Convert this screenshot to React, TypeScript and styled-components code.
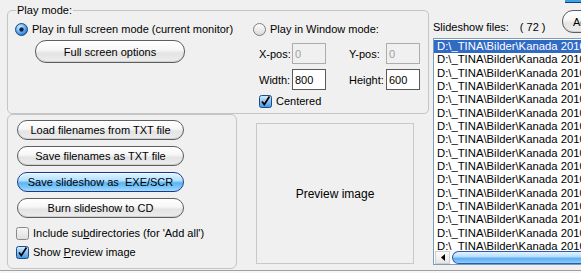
import React from 'react';
import styled, { createGlobalStyle, css } from 'styled-components';

const GlobalStyle = createGlobalStyle`
  html, body {
    margin: 0;
    padding: 0;
    background: #f0f0f0;
  }
  body {
    font-family: 'Liberation Sans', Arial, sans-serif;
    font-size: 11px;
    color: #000;
  }
`;

const Window = styled.div`
  width: 581px;
  height: 273px;
  overflow: hidden;
  background: #f0f0f0;
  display: flex;
  flex-direction: column;
`;

const Main = styled.div`
  height: 270px;
  display: flex;
  flex-shrink: 0;
`;

const BottomEdge = styled.div`
  flex: 1;
  border-top: 1px solid #a0a0a0;
  background: #f7f7f7;
`;

const LeftCol = styled.div`
  width: 422px;
  margin-left: 7px;
  display: flex;
  flex-direction: column;
  flex-shrink: 0;
`;

const PlayModeBox = styled.fieldset`
  margin: 4px 0 0 0;
  padding: 6px 0 0 0;
  height: 110px;
  box-sizing: border-box;
  border: 1px solid #c5c5c5;
  border-radius: 5px;
  display: flex;
  min-width: 0;
`;

const Legend = styled.legend`
  margin-left: 8px;
  padding: 0 1px;
  line-height: 13px;
`;

const FullScreenCol = styled.div`
  width: 245px;
  padding-left: 7px;
  box-sizing: border-box;
  display: flex;
  flex-direction: column;
  align-items: flex-start;
`;

const WindowCol = styled.div`
  display: flex;
  flex-direction: column;
  align-items: flex-start;
`;

const OptionRow = styled.label`
  display: flex;
  align-items: center;
  gap: 4px;
  height: 13px;
  line-height: 13px;
  white-space: nowrap;
`;

const PosGrid = styled.div`
  margin: 7px 0 0 6px;
  display: grid;
  grid-template-columns: 33px 34px 23px 37px 34px;
  grid-auto-rows: 21px;
  row-gap: 5px;
  align-items: center;
`;

const PosLabel = styled.span<{ $col: number }>`
  grid-column: ${({ $col }) => $col};
  white-space: nowrap;
`;

const PosInput = styled.input<{ $col: number }>`
  grid-column: ${({ $col }) => $col};
  width: 34px;
  height: 21px;
  box-sizing: border-box;
  margin: 0;
  padding: 0 2px;
  font: 11px 'Liberation Sans', Arial, sans-serif;
  border: 1px solid ${({ disabled }) => (disabled ? '#adadad' : '#5a5a5a')};
  background: ${({ disabled }) => (disabled ? '#f0f0f0' : '#fff')};
  color: ${({ disabled }) => (disabled ? '#a0a0a0' : '#000')};
  outline: none;
`;

const CenteredRow = styled(OptionRow)`
  margin: 5px 0 0 6px;
`;

const pill = css`
  box-sizing: border-box;
  border-radius: 11px;
  border: 1px solid #5e5e5e;
  background: linear-gradient(#ffffff 0%, #f7f7f7 42%, #e4e4e4 58%, #ececec 100%);
  box-shadow: inset 0 1px 0 #fff, inset 0 -1px 0 #d0d0d0;
  font: 11px 'Liberation Sans', Arial, sans-serif;
  color: #000;
  padding: 0;
  display: flex;
  align-items: center;
  justify-content: center;
  white-space: nowrap;
`;

const PillButton = styled.button<{ $blue?: boolean; $w: number; $h: number }>`
  ${pill};
  width: ${({ $w }) => $w}px;
  height: ${({ $h }) => $h}px;
  ${({ $blue }) =>
    $blue &&
    css`
      border-color: #1d3890;
      background: linear-gradient(#e2f4ff 0%, #b3e0ff 42%, #5db3f3 55%, #7cc8fb 80%, #a6dcff 100%);
      box-shadow: inset 0 1px 0 #f0faff;
    `}
`;

const FullScreenButton = styled(PillButton)`
  margin: 4px 0 0 20px;
`;

const LowerRow = styled.div`
  display: flex;
  align-items: flex-start;
`;

const ActionBox = styled.div`
  width: 230px;
  height: 155px;
  box-sizing: border-box;
  border: 1px solid #c5c5c5;
  border-radius: 6px;
  padding: 5px 0 0 9px;
  display: flex;
  flex-direction: column;
  align-items: flex-start;
`;

const ButtonStack = styled.div`
  display: flex;
  flex-direction: column;
  gap: 6px;
`;

const CheckStack = styled.div`
  margin: 9px 0 0 -1px;
  display: flex;
  flex-direction: column;
  gap: 6px;
`;

const PreviewBox = styled.div`
  margin: 9px 0 0 19px;
  width: 158px;
  height: 141px;
  box-sizing: border-box;
  border: 1px solid #c9c9c9;
  display: flex;
  align-items: center;
  justify-content: center;
  font-size: 12px;
`;

const RightCol = styled.div`
  margin-left: 4px;
  display: flex;
  flex-direction: column;
  flex-shrink: 0;
`;

const FilesHeader = styled.div`
  height: 38px;
  display: flex;
  align-items: flex-start;
`;

const FilesLabel = styled.div`
  width: 129px;
  margin-top: 21px;
  line-height: 13px;
  white-space: nowrap;
`;

const Count = styled.span`
  margin-left: 11px;
`;

const TopButtons = styled.div`
  display: flex;
  flex-direction: column;
`;

const ClippedButtonEdge = styled.div`
  margin-left: 3px;
  width: 40px;
  height: 2px;
  background: #3aa6d8;
  border-bottom: 1px solid #1d3890;
`;

const AddButton = styled.button`
  ${pill};
  margin-top: 7px;
  width: 44px;
  height: 23px;
  justify-content: flex-start;
  padding-left: 10px;
  border-radius: 11px 0 0 11px;
`;

const ListBox = styled.div`
  width: 200px;
  height: 227px;
  box-sizing: border-box;
  border: 1px solid #7f9db9;
  background: #fff;
  padding: 1px 0 0 0;
  display: flex;
  flex-direction: column;
`;

const Rows = styled.div`
  flex: 1;
  overflow: hidden;
`;

const Row = styled.div<{ $selected?: boolean }>`
  height: 13.33px;
  line-height: 13.33px;
  padding-left: 3px;
  font-size: 11.3px;
  white-space: nowrap;
  background: ${({ $selected }) => ($selected ? '#316ac5' : 'transparent')};
  color: ${({ $selected }) => ($selected ? '#fff' : '#000')};
`;

const HScroll = styled.div`
  height: 13px;
  margin: 0 0 0 1px;
  display: flex;
  align-items: center;
  background: #fafafa;
  flex-shrink: 0;
`;

const ScrollArrow = styled.div`
  width: 15px;
  height: 13px;
  box-sizing: border-box;
  border: 1px solid #cfcfcf;
  background: linear-gradient(#fdfdfd, #e6e6e6);
  display: flex;
  align-items: center;
  justify-content: center;
`;

const ScrollThumb = styled.div`
  margin-left: 2px;
  flex: 1;
  height: 13px;
  box-sizing: border-box;
  border: 1px solid #2a5bb0;
  border-right: none;
  border-radius: 7px 0 0 7px;
  background: linear-gradient(#e4f3ff 0%, #b8dfff 40%, #5eaef0 60%, #8ccdfb 100%);
`;

const Radio = ({ checked }: { checked?: boolean }) => (
  <svg width="13" height="13" viewBox="0 0 13 13">
    <defs>
      <radialGradient id="rOn" cx="40%" cy="35%" r="70%">
        <stop offset="0%" stopColor="#eaf8ff" />
        <stop offset="50%" stopColor="#6fb6f0" />
        <stop offset="100%" stopColor="#1f66c0" />
      </radialGradient>
      <linearGradient id="rOff" x1="0" y1="0" x2="0" y2="1">
        <stop offset="0%" stopColor="#ffffff" />
        <stop offset="100%" stopColor="#d8d8d8" />
      </linearGradient>
    </defs>
    <circle
      cx="6.5"
      cy="6.5"
      r="6"
      fill={checked ? 'url(#rOn)' : 'url(#rOff)'}
      stroke={checked ? '#1b4d86' : '#7d7d7d'}
    />
    {checked && <circle cx="6.5" cy="6.5" r="2.2" fill="#0b2350" />}
  </svg>
);

const CheckBox = ({ checked }: { checked?: boolean }) => (
  <svg width="13" height="13" viewBox="0 0 13 13">
    <defs>
      <linearGradient id="cOn" x1="0" y1="0" x2="0" y2="1">
        <stop offset="0%" stopColor="#d9efff" />
        <stop offset="100%" stopColor="#3f93e4" />
      </linearGradient>
      <linearGradient id="cOff" x1="0" y1="0" x2="0" y2="1">
        <stop offset="0%" stopColor="#f7f7f7" />
        <stop offset="100%" stopColor="#dedede" />
      </linearGradient>
    </defs>
    <rect
      x="0.5"
      y="0.5"
      width="12"
      height="12"
      rx="2"
      fill={checked ? 'url(#cOn)' : 'url(#cOff)'}
      stroke={checked ? '#1b4d86' : '#8a8a8a'}
    />
    {checked && (
      <path d="M3 6.5 L5.3 9.5 L10.5 1.5" fill="none" stroke="#000" strokeWidth="1.7" />
    )}
  </svg>
);

const files = Array.from({ length: 16 }, () => 'D:\\_TINA\\Bilder\\Kanada 2010\\IMG_');

export default function App() {
  return (
    <Window>
      <GlobalStyle />
      <Main>
        <LeftCol>
          <PlayModeBox>
            <Legend>Play mode:</Legend>
            <FullScreenCol>
              <OptionRow>
                <Radio checked />
                Play in full screen mode (current monitor)
              </OptionRow>
              <FullScreenButton $w={150} $h={23}>
                Full screen options
              </FullScreenButton>
            </FullScreenCol>
            <WindowCol>
              <OptionRow>
                <Radio />
                Play in Window mode:
              </OptionRow>
              <PosGrid>
                <PosLabel $col={1}>X-pos:</PosLabel>
                <PosInput $col={2} disabled defaultValue="0" />
                <PosLabel $col={4}>Y-pos:</PosLabel>
                <PosInput $col={5} disabled defaultValue="0" />
                <PosLabel $col={1}>Width:</PosLabel>
                <PosInput $col={2} defaultValue="800" />
                <PosLabel $col={4}>Height:</PosLabel>
                <PosInput $col={5} defaultValue="600" />
              </PosGrid>
              <CenteredRow>
                <CheckBox checked />
                Centered
              </CenteredRow>
            </WindowCol>
          </PlayModeBox>
          <LowerRow>
            <ActionBox>
              <ButtonStack>
                <PillButton $w={167} $h={20}>Load filenames from TXT file</PillButton>
                <PillButton $w={167} $h={20}>Save filenames as TXT file</PillButton>
                <PillButton $w={167} $h={20} $blue>
                  Save slideshow as&nbsp; EXE/SCR
                </PillButton>
                <PillButton $w={167} $h={20}>Burn slideshow to CD</PillButton>
              </ButtonStack>
              <CheckStack>
                <OptionRow>
                  <CheckBox />
                  <span>
                    Include su<u>b</u>directories (for 'Add all')
                  </span>
                </OptionRow>
                <OptionRow>
                  <CheckBox checked />
                  <span>
                    Show <u>P</u>review image
                  </span>
                </OptionRow>
              </CheckStack>
            </ActionBox>
            <PreviewBox>Preview image</PreviewBox>
          </LowerRow>
        </LeftCol>
        <RightCol>
          <FilesHeader>
            <FilesLabel>
              Slideshow files:<Count>( 72 )</Count>
            </FilesLabel>
            <TopButtons>
              <ClippedButtonEdge />
              <AddButton>Add</AddButton>
            </TopButtons>
          </FilesHeader>
          <ListBox>
            <Rows>
              {files.map((f, i) => (
                <Row key={i} $selected={i === 0}>
                  {f}
                </Row>
              ))}
            </Rows>
            <HScroll>
              <ScrollArrow>
                <svg width="4" height="7" viewBox="0 0 4 7">
                  <path d="M4 0 L0 3.5 L4 7 Z" fill="#000" />
                </svg>
              </ScrollArrow>
              <ScrollThumb />
            </HScroll>
          </ListBox>
        </RightCol>
      </Main>
      <BottomEdge />
    </Window>
  );
}
